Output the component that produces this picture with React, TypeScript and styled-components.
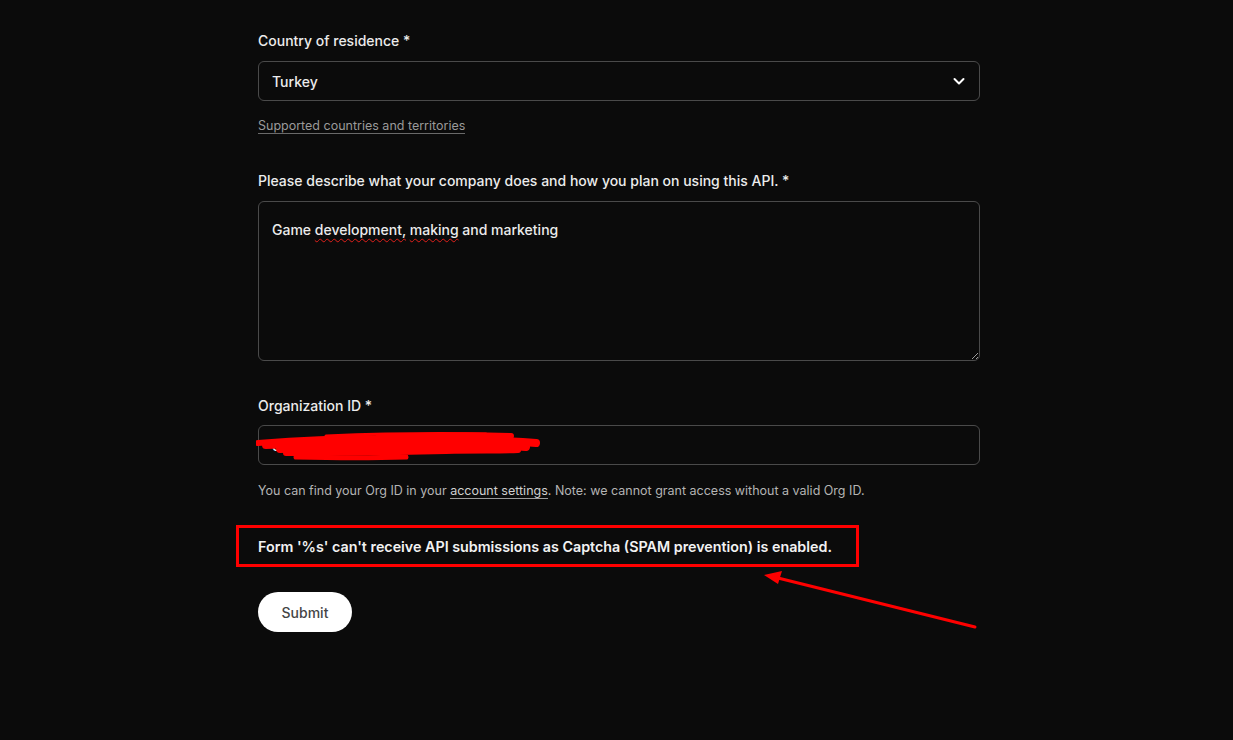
import styled, { createGlobalStyle } from 'styled-components';

const GlobalStyle = createGlobalStyle`
  html, body {
    margin: 0;
    padding: 0;
    background: #0b0b0b;
    font-family: Inter, "Noto Sans", "Liberation Sans", sans-serif;
    color: #ececec;
  }
`;

const Page = styled.div`
  position: relative;
  min-height: 740px;
  padding: 31px 0 0 258px;
  box-sizing: border-box;
`;

const Form = styled.form`
  width: 722px;
  display: flex;
  flex-direction: column;
  gap: 35px;
`;

const Field = styled.div`
  display: flex;
  flex-direction: column;
`;

const Label = styled.label<{ $gap?: number }>`
  font-size: 14px;
  line-height: 20px;
  font-weight: 500;
  color: #ececec;
  margin-bottom: ${(p) => p.$gap ?? 10}px;
`;

const Control = styled.div<{ $height?: number }>`
  position: relative;
  box-sizing: border-box;
  height: ${(p) => p.$height ?? 40}px;
  border: 1px solid #4a4a4a;
  border-radius: 6px;
  display: flex;
  align-items: center;
  padding: 0 14px 0 13px;
  font-size: 14px;
  font-weight: 500;
  color: #ececec;
`;

const SelectBox = styled(Control)`
  justify-content: space-between;
`;

const TextArea = styled.div`
  box-sizing: border-box;
  height: 160px;
  border: 1px solid #4a4a4a;
  border-radius: 6px;
  padding: 18px 14px 18px 13px;
  font-size: 14px;
  line-height: 20px;
  font-weight: 500;
  color: #ececec;
  resize: vertical;
  overflow: auto;
`;

const Misspelled = styled.span`
  text-decoration: underline wavy #e0201a;
  text-decoration-thickness: 1px;
  text-underline-offset: 3px;
`;

const Help = styled.div<{ $top?: number }>`
  margin-top: ${(p) => p.$top ?? 15}px;
  font-size: 12.5px;
  line-height: 20px;
  color: #b4b4b4;
`;

const MutedLink = styled.a`
  align-self: flex-start;
  color: #9a9a9a;
  text-decoration: none;
  border-bottom: 1px solid #6a6a6a;
  line-height: 17px;
`;

const InlineLink = styled.a`
  color: #d0d0d0;
  text-decoration: none;
  border-bottom: 1px solid #9a9a9a;
`;

const ErrorRow = styled.div`
  position: relative;
  margin-top: 1px;
  font-size: 14.3px;
  line-height: 20px;
  font-weight: 600;
  color: #f2f2f2;
`;

const Highlight = styled.span`
  position: absolute;
  left: -22px;
  top: -12px;
  width: 623px;
  height: 42px;
  border: 3px solid #ff0000;
  box-sizing: border-box;
`;

const SubmitButton = styled.button`
  align-self: flex-start;
  width: 94px;
  height: 40px;
  border: none;
  border-radius: 20px;
  background: #ffffff;
  color: #454545;
  font-family: inherit;
  font-size: 14px;
  font-weight: 500;
  cursor: pointer;
`;

const Scribble = styled.svg`
  position: absolute;
  left: -3px;
  top: 4px;
  pointer-events: none;
`;

const Overlay = styled.svg`
  position: absolute;
  left: 0;
  top: 0;
  pointer-events: none;
`;

const Chevron = () => (
  <svg width="12" height="12" viewBox="0 0 12 12" fill="none">
    <path d="M1.5 4l4.5 4.5L10.5 4" stroke="#ffffff" strokeWidth="2" strokeLinecap="round" strokeLinejoin="round" />
  </svg>
);

export default function App() {
  return (
    <Page>
      <GlobalStyle />
      <Form onSubmit={(e) => e.preventDefault()}>
        <Field>
          <Label>Country of residence *</Label>
          <SelectBox>
            <span>Turkey</span>
            <Chevron />
          </SelectBox>
          <Help>
            <MutedLink href="#">Supported countries and territories</MutedLink>
          </Help>
        </Field>

        <Field>
          <Label>Please describe what your company does and how you plan on using this API. *</Label>
          <TextArea>
            Game <Misspelled>development,</Misspelled> <Misspelled>making</Misspelled> and marketing
          </TextArea>
        </Field>

        <Field>
          <Label $gap={9}>Organization ID *</Label>
          <Control>
            <span>org-</span>
            <Scribble width="290" height="34" viewBox="0 0 290 34">
              <g stroke="#ff0000" strokeLinecap="round" strokeLinejoin="round" fill="none">
                <path d="M2 13 C40 10 80 8 120 8 C160 6 200 4 255 6" strokeWidth="6" />
                <path d="M10 15 C60 13 120 12 180 11 C220 10 250 10 280 13" strokeWidth="8" />
                <path d="M24 19 C90 17 150 16 200 16 C230 15 255 15 270 17" strokeWidth="8" />
                <path d="M30 23 C90 23 140 22 190 21 C220 20 245 21 262 20" strokeWidth="6" />
                <path d="M40 27 C80 28 120 28 150 27" strokeWidth="5" />
                <path d="M70 6 C120 4 180 3 230 4" strokeWidth="3" />
              </g>
            </Scribble>
          </Control>
          <Help $top={16}>
            You can find your Org ID in your <InlineLink href="#">account settings</InlineLink>. Note: we cannot grant
            access without a valid Org ID.
          </Help>
        </Field>

        <ErrorRow>
          Form '%s' can't receive API submissions as Captcha (SPAM prevention) is enabled.
          <Highlight />
        </ErrorRow>

        <SubmitButton type="submit">Submit</SubmitButton>
      </Form>

      <Overlay width="1233" height="740" viewBox="0 0 1233 740">
        <line x1="975" y1="627" x2="778" y2="578" stroke="#ff0000" strokeWidth="3" strokeLinecap="round" />
        <path d="M764 575 L782 571 L778 584 Z" fill="#ff0000" />
      </Overlay>
    </Page>
  );
}
